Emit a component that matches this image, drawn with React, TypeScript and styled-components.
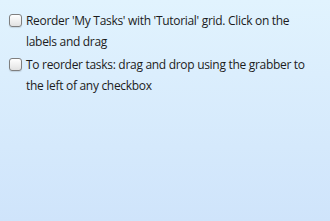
import React from "react";
import styled, { createGlobalStyle } from "styled-components";

const Global = createGlobalStyle`
  html, body { margin: 0; padding: 0; height: 100%; }
  body {
    background: linear-gradient(180deg, #e1f3fe 0%, #cfe4fb 100%);
    min-height: 221px;
    font-family: "Open Sans", "Liberation Sans", sans-serif;
  }
`;

const List = styled.ul`
  list-style: none;
  margin: 0;
  padding: 11px 8px 0 9px;
  display: flex;
  flex-direction: column;
  gap: 3px;
`;

const Item = styled.li`
  display: flex;
  align-items: flex-start;
  gap: 4px;
`;

const Box = styled.span`
  flex: none;
  width: 11px;
  height: 11px;
  margin-top: 3px;
  border: 1px solid #7f7f7f;
  border-radius: 3px;
  background: linear-gradient(180deg, #ffffff 0%, #e2e2e2 100%);
  box-shadow: 0 1px 1px rgba(0, 0, 0, 0.12);
`;

const Label = styled.span`
  font-size: 12px;
  letter-spacing: -0.3px;
  line-height: 20.5px;
  color: #1c1c1c;
`;

const items = [
  "Reorder 'My Tasks' with 'Tutorial' grid. Click on the labels and drag",
  "To reorder tasks: drag and drop using the grabber to the left of any checkbox",
];

export default function App() {
  return (
    <>
      <Global />
      <List>
        {items.map((t) => (
          <Item key={t}>
            <Box />
            <Label>{t}</Label>
          </Item>
        ))}
      </List>
    </>
  );
}
